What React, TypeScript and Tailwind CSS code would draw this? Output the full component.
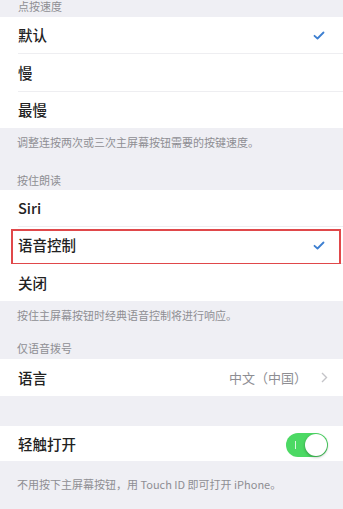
import React from 'react';

const font = { fontFamily: '"Noto Sans CJK SC", "Noto Sans", sans-serif' };

function Check() {
  return (
    <svg width="12" height="9" viewBox="0 0 12 9" className="mr-[2px]">
      <polyline points="1.5,4.8 4.5,7.5 10.5,1.5" fill="none" stroke="#3d7fd1" strokeWidth="1.8" strokeLinecap="round" strokeLinejoin="round" />
    </svg>
  );
}

function Row({ label, checked, last, boxed, h = 'h-[37px]' }: { label: string; checked?: boolean; last?: boolean; boxed?: boolean; h?: string }) {
  return (
    <div className={`relative bg-white ${h} pl-[18px]`}>
      <div className={`flex h-full items-center pr-[16px] ${last ? '' : 'border-b border-[#eeeef1]'}`}>
        <span className="flex-1 text-[14.5px] font-medium text-[#222]">{label}</span>
        {checked && <Check />}
      </div>
      {boxed && <div className="absolute left-[11px] right-[2px] top-[2px] bottom-[-1px] border-2 border-[#e0484a]" />}
    </div>
  );
}

export default function App() {
  return (
    <div className="w-[343px] h-[509px] overflow-hidden bg-[#efeff4]" style={font}>
      <div className="h-[17px] flex items-end pl-[18px] pb-[5px] overflow-hidden">
        <span className="text-[11px] leading-[12px] text-[#8e8e93]">点按速度</span>
      </div>
      <Row label="默认" checked />
      <Row label="慢" h="h-[38px]" />
      <Row label="最慢" last h="h-[36px]" />
      <div className="h-[62px] pl-[17px] flex flex-col">
        <span className="mt-[8px] text-[11px] leading-[12px] text-[#8e8e93]">调整连按两次或三次主屏幕按钮需要的按键速度。</span>
        <span className="mt-[26px] text-[11px] leading-[12px] text-[#8e8e93]">按住朗读</span>
      </div>
      <Row label="Siri" />
      <Row label="语音控制" checked boxed />
      <Row label="关闭" last />
      <div className="h-[58px] pl-[17px] flex flex-col">
        <span className="mt-[8px] text-[11px] leading-[12px] text-[#8e8e93]">按住主屏幕按钮时经典语音控制将进行响应。</span>
        <span className="mt-[21px] text-[11px] leading-[12px] text-[#8e8e93]">仅语音拨号</span>
      </div>
      <div className="bg-white h-[37px] pl-[18px] pr-[15px] flex items-center">
        <span className="flex-1 text-[14.5px] font-medium text-[#222]">语言</span>
        <span className="text-[13px] text-[#8e8e93] mr-[14px]">中文（中国）</span>
        <svg width="7" height="11" viewBox="0 0 7 11">
          <polyline points="1,1 5.5,5.5 1,10" fill="none" stroke="#c4c4c8" strokeWidth="1.4" />
        </svg>
      </div>
      <div className="h-[30px]" />
      <div className="bg-white h-[35px] pl-[18px] pr-[15px] flex items-center">
        <span className="flex-1 text-[14.5px] font-medium text-[#222]">轻触打开</span>
        <div className="relative w-[42px] h-[24px] rounded-full bg-[#4cd964] mt-[2px]">
          <div className="absolute left-[9px] top-[8px] w-[1px] h-[8px] bg-white/80" />
          <div className="absolute right-[1px] top-[1px] w-[22px] h-[22px] rounded-full bg-white shadow-[0_1px_3px_rgba(0,0,0,0.35)]" />
        </div>
      </div>
      <div className="pl-[17px] pt-[9px]">
        <span className="text-[11px] leading-[12px] text-[#8e8e93]">不用按下主屏幕按钮，用 Touch ID 即可打开 iPhone。</span>
      </div>
    </div>
  );
}
